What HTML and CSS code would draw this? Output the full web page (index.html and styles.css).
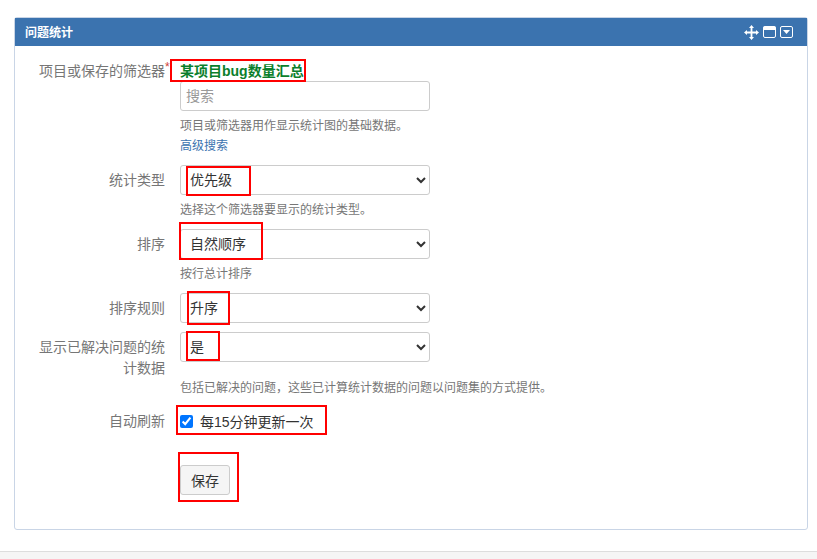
FILE: index.html
```html
<!DOCTYPE html>
<html lang="zh-CN">

<head>
  <meta charset="UTF-8">
  <meta name="viewport" content="width=device-width, initial-scale=1.0">
  <title>问题统计</title>
  <link rel="stylesheet" href="styles.css">
</head>

<body>
  <div class="panel">
    <div class="panel-header">
      <h3>问题统计</h3>
      <div class="panel-icons">
        <svg width="15" height="15" viewBox="0 0 15 15" fill="#fff">
          <path d="M7.5 0 10 3H8.4v3.6H12V5l3 2.5L12 10V8.4H8.4V12H10l-2.5 3L5 12h1.6V8.4H3V10L0 7.5 3 5v1.6h3.6V3H5z" />
        </svg>
        <svg width="13" height="12" viewBox="0 0 13 12">
          <rect x="0.5" y="0.5" width="12" height="11" rx="1.5" fill="none" stroke="#fff" />
          <rect x="0.5" y="0.5" width="12" height="3.5" fill="#fff" />
        </svg>
        <svg width="13" height="12" viewBox="0 0 13 12">
          <rect x="0.5" y="0.5" width="12" height="11" rx="1.5" fill="none" stroke="#fff" />
          <path d="M3 4h7L6.5 8z" fill="#fff" />
        </svg>
      </div>
    </div>

    <form class="form">
      <div class="row">
        <label class="label label-top">项目或保存的筛选器<span class="required">*</span></label>
        <div class="field">
          <div class="filter-name">某项目bug数量汇总</div>
          <input class="text-input" type="text" placeholder="搜索">
          <div class="help">项目或筛选器用作显示统计图的基础数据。</div>
          <a class="link" href="#">高级搜索</a>
        </div>
      </div>

      <div class="row">
        <label class="label">统计类型</label>
        <div class="field">
          <select class="select"><option>优先级</option></select>
          <div class="help">选择这个筛选器要显示的统计类型。</div>
        </div>
      </div>

      <div class="row">
        <label class="label">排序</label>
        <div class="field">
          <select class="select"><option>自然顺序</option></select>
          <div class="help">按行总计排序</div>
        </div>
      </div>

      <div class="row row-tight">
        <label class="label">排序规则</label>
        <div class="field">
          <select class="select"><option>升序</option></select>
        </div>
      </div>

      <div class="row row-refresh">
        <label class="label">显示已解决问题的统计数据</label>
        <div class="field">
          <select class="select"><option>是</option></select>
        </div>
        <div class="help help-wide">包括已解决的问题，这些已计算统计数据的问题以问题集的方式提供。</div>
      </div>

      <div class="row row-check">
        <label class="label label-top">自动刷新</label>
        <label class="check">
          <input type="checkbox" checked>
          每15分钟更新一次
        </label>
      </div>

      <div class="row row-actions">
        <button class="btn" type="button">保存</button>
      </div>
    </form>
  </div>

  <div class="footer"></div>

  <!-- red boxes drawn over the screenshot -->
  <div class="mark mark-filter"></div>
  <div class="mark mark-type"></div>
  <div class="mark mark-sort"></div>
  <div class="mark mark-order"></div>
  <div class="mark mark-resolved"></div>
  <div class="mark mark-refresh"></div>
  <div class="mark mark-save"></div>
</body>

</html>
```

FILE: styles.css
```css
* {
  margin: 0;
  padding: 0;
  box-sizing: border-box;
  font-family: Arial, "Liberation Sans", "Noto Sans CJK SC", sans-serif;
}

html,
body {
  height: 559px;
  overflow: hidden;
}

body {
  position: relative;
  background: #fff;
  padding-top: 17px;
  font-size: 14px;
  color: #333;
}

/* Panel */
.panel {
  width: 794px;
  height: 513px;
  margin-left: 14px;
  border: 1px solid #c9d5e6;
  border-radius: 3px;
}

.panel-header {
  display: flex;
  justify-content: space-between;
  align-items: center;
  height: 28px;
  padding: 0 14px 0 10px;
  background: #3b73af;
  color: #fff;
}

.panel-header h3 {
  margin-top: -2px;
  font-size: 12px;
  font-weight: bold;
}

.panel-icons {
  display: flex;
  align-items: center;
  gap: 4px;
}

/* Form */
.form {
  padding: 15px 0 0 24px;
}

.row {
  display: grid;
  grid-template-columns: 126px 1fr;
  column-gap: 15px;
  margin-bottom: 10px;
}

.row-tight {
  margin-bottom: 9px;
}

.row-refresh {
  margin-bottom: 14px;
}

.row-check {
  margin-bottom: 33px;
}

.row-actions {
  margin-bottom: 0;
}

.label {
  position: relative;
  padding-top: 5px;
  font-size: 14px;
  line-height: 21px;
  text-align: right;
  color: #767676;
}

.label-top {
  padding-top: 0;
}

.required {
  position: absolute;
  top: -4px;
  left: 126px;
  font-size: 12px;
  color: #d04437;
}

.field {
  width: 250px;
}

.filter-name {
  height: 20px;
  font-size: 14px;
  line-height: 20px;
  font-weight: bold;
  color: #0b7f2c;
}

.text-input {
  display: block;
  width: 250px;
  height: 30px;
  padding: 0 5px;
  border: 1px solid #ccc;
  border-radius: 3px;
  font-size: 14px;
}

.text-input::placeholder {
  color: #999;
}

.select {
  display: block;
  width: 250px;
  height: 30px;
  padding: 0 5px;
  border: 1px solid #ccc;
  border-radius: 3px;
  background: #fff;
  font-size: 14px;
  color: #333;
}

.help {
  margin-top: 6px;
  font-size: 12px;
  line-height: 18px;
  color: #767676;
  white-space: nowrap;
}

.help-wide {
  grid-column: 2;
  margin-top: 0;
}

.link {
  display: block;
  margin-top: 2px;
  font-size: 12px;
  line-height: 18px;
  color: #3b73af;
  text-decoration: none;
}

.check {
  display: flex;
  align-items: center;
  gap: 7px;
  height: 20px;
  font-size: 14px;
}

.check input {
  width: 13px;
  height: 13px;
}

.btn {
  grid-column: 2;
  width: 50px;
  height: 30px;
  border: 1px solid #ccc;
  border-radius: 3px;
  background: #f5f5f5;
  font-size: 14px;
  color: #333;
}

/* Footer */
.footer {
  height: 8px;
  margin-top: 21px;
  border-top: 1px solid #ddd;
  background: #f5f5f5;
}

/* Red annotation boxes */
.mark {
  position: absolute;
  border: 2px solid #f00;
}

.mark-filter {
  left: 170px;
  top: 59px;
  width: 136px;
  height: 23px;
}

.mark-type {
  left: 186px;
  top: 166px;
  width: 65px;
  height: 30px;
}

.mark-sort {
  left: 179px;
  top: 222px;
  width: 84px;
  height: 38px;
}

.mark-order {
  left: 187px;
  top: 291px;
  width: 43px;
  height: 34px;
}

.mark-resolved {
  left: 186px;
  top: 331px;
  width: 34px;
  height: 30px;
}

.mark-refresh {
  left: 176px;
  top: 405px;
  width: 151px;
  height: 30px;
}

.mark-save {
  left: 178px;
  top: 452px;
  width: 61px;
  height: 50px;
}
```
